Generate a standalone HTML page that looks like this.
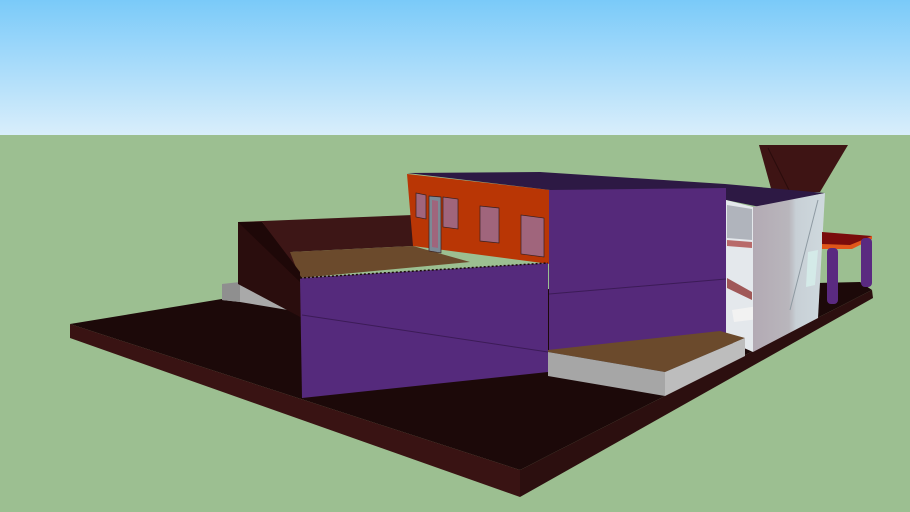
<!DOCTYPE html>
<html><head><meta charset="utf-8"><style>
html,body{margin:0;padding:0;width:910px;height:512px;overflow:hidden}
svg{display:block}
</style></head><body>
<svg width="910" height="512" viewBox="0 0 910 512" xmlns="http://www.w3.org/2000/svg">
<defs>
<linearGradient id="sky" x1="0" y1="0" x2="0" y2="1">
<stop offset="0" stop-color="#7acaf9"/><stop offset="1" stop-color="#d9eefb"/>
</linearGradient>
<linearGradient id="glass" x1="0" y1="0" x2="1" y2="0">
<stop offset="0" stop-color="#b3aab4"/><stop offset="0.5" stop-color="#b9b6bc"/><stop offset="0.6" stop-color="#c8d0d6"/><stop offset="1" stop-color="#cfd9de"/>
</linearGradient>
</defs>
<rect x="0" y="0" width="910" height="135" fill="url(#sky)"/>
<rect x="0" y="135" width="910" height="377" fill="#9cbf91"/>
<polygon points="759,145 848,145 820,192 772,192" fill="#3e1414"/>
<line x1="768" y1="148" x2="790" y2="192" stroke="#2a0c0c" stroke-width="1"/>
<polygon points="70,324 240,296 860,282 872,290 520,470" fill="#1c0909"/>
<polygon points="70,324 520,470 520,497 70,338" fill="#391313"/>
<polygon points="520,470 872,290 873,298 520,497" fill="#2c0f0f"/>
<polygon points="222,284 242,282 300,300 300,312 240,302 222,300" fill="#a9a9a9"/>
<polygon points="222,284 240,282 240,302 222,300" fill="#8f8f8f"/>
<polygon points="240,260 240,284 265,284" fill="#d00000"/>
<polygon points="238,222 413,215 413,246 290,252 262,222" fill="#3d1616"/>
<polygon points="262,222 292,250 300,278 270,240" fill="#3d1616"/>
<polygon points="290,252 413,246 470,262 300,278" fill="#6b4a2c"/>
<polygon points="238,222 262,222 302,278 302,318 238,284" fill="#2a0d0d"/>
<polygon points="238,222 262,222 300,272 300,282" fill="#1e0808"/>
<polygon points="407,174 550,190 550,264 413,246" fill="#b93605"/>
<g fill="#a0657c" stroke="#3a2020" stroke-width="0.7">
<polygon points="416,193 426,195 426,219 416,217"/>
<polygon points="443,197 458,199 458,229 443,227"/>
<polygon points="480,206 499,208 499,243 480,241"/>
<polygon points="521,215 544,218 544,257 521,254"/>
</g>
<polygon points="429,196 441,197 441,253 429,251" fill="#7c8a96" stroke="#3a2020" stroke-width="0.7"/>
<polygon points="432,200 438,201 438,248 432,247" fill="#a0657c"/>
<polygon points="407,173 540,172 725,184 825,193 760,207 726,200 550,190" fill="#2d1944"/>
<polygon points="549,190 726,188 726,333 549,352" fill="#55297a"/>
<line x1="549" y1="294" x2="726" y2="279" stroke="#3c1b57" stroke-width="1"/>
<polygon points="300,278 548,263 548,372 302,398" fill="#552a7c"/>
<line x1="302" y1="315" x2="548" y2="352" stroke="#3c1b57" stroke-width="1"/>
<polyline points="300,278 548,263" fill="none" stroke="#1a0a0a" stroke-width="1.5" stroke-dasharray="2,2"/>
<polygon points="726,200 753,207 753,352 726,340" fill="#e4e8ec"/>
<polygon points="727,205 752,209 752,240 727,238" fill="#b0b4bc"/>
<polygon points="727,240 752,242 752,248 727,246" fill="#b86a6a"/>
<polygon points="727,278 752,292 752,300 727,288" fill="#a05858"/>
<polygon points="732,310 765,305 767,318 734,322" fill="#f2f2f2"/>
<polygon points="753,207 825,193 818,318 753,352" fill="url(#glass)"/>
<line x1="818" y1="200" x2="790" y2="310" stroke="#8e9aa2" stroke-width="1"/>
<polygon points="808,252 818,250 815,285 806,287" fill="#d4eae8"/>
<polygon points="548,350 720,331 745,338 665,372 548,352" fill="#6b4a2c"/>
<polygon points="548,352 665,372 665,396 548,376" fill="#a6a6a6"/>
<polygon points="665,372 745,338 745,356 665,396" fill="#bdbdbd"/>
<polygon points="822,232 872,236 850,247 822,247" fill="#7a0c0c"/>
<polygon points="822,244 850,245 872,236 872,239 852,249 822,249" fill="#e0561a"/>
<rect x="827" y="248" width="11" height="56" rx="4" fill="#5a2a80"/>
<rect x="861" y="238" width="11" height="49" rx="4" fill="#5a2a80"/>
</svg>
</body></html>
